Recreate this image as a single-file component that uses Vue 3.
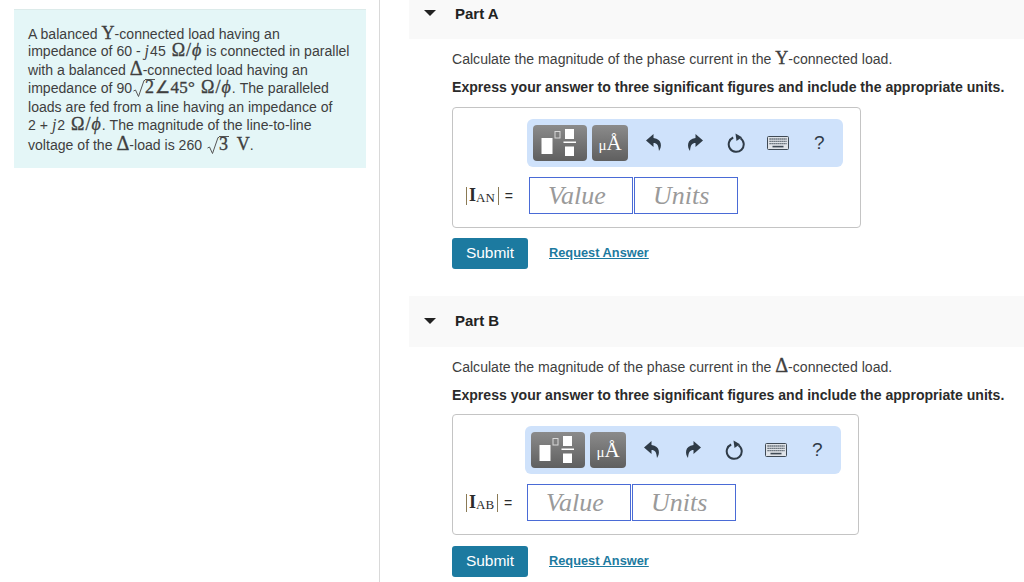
<script setup>
const parts = [
  {
    name: 'Part A',
    load: 'Y',
    sub: 'AN',
    compact: false,
  },
  {
    name: 'Part B',
    load: 'Δ',
    sub: 'AB',
    compact: true,
  },
]
</script>

<template>
  <div class="page">
    <aside class="side">
      <div class="intro">
        <div class="line l1">A balanced <span class="m big">Y</span>-connected load having an</div>
        <div class="line l2">impedance of 60 - <i class="j">j</i>45 <span class="m big per">Ω/<i>ϕ</i></span> is connected in parallel</div>
        <div class="line l3">with a balanced <span class="m big delta">Δ</span>-connected load having an</div>
        <div class="line l4">
          impedance of 90<svg class="radical" width="12" height="18" viewBox="0 0 12 18"><path d="M0.500 11l2-1 3 6.500L11 .5h1" fill="none" stroke="#555" stroke-width="1" /></svg><span class="m big over">2</span><span class="m big angle">∠45°</span>
          <span class="m big per gap">Ω/<i>ϕ</i></span>. The paralleled
        </div>
        <div class="line l5">loads are fed from a line having an impedance of</div>
        <div class="line l6">2 + <i class="j">j</i>2 <span class="m big per">Ω/<i>ϕ</i></span>. The magnitude of the line-to-line</div>
        <div class="line l7">
          voltage of the <span class="m big delta">Δ</span>-load is 260 <svg class="radical" width="12" height="18" viewBox="0 0 12 18"><path d="M0.500 11l2-1 3 6.500L11 .5h1" fill="none" stroke="#555" stroke-width="1" /></svg><span class="m big over">3</span>&nbsp;&nbsp;<span class="m big">V</span>.
        </div>
      </div>
    </aside>

    <main class="main">
      <section v-for="part in parts" :key="part.name" class="part">
        <header class="part-head">
          <span class="caret"></span>
          <span class="part-name">{{ part.name }}</span>
        </header>
        <div class="part-body">
          <p class="question">
            Calculate the magnitude of the phase current in the
            <span class="m big" :class="{ delta: part.load === 'Δ' }">{{ part.load }}</span>-connected load.
          </p>
          <p class="instruction">Express your answer to three significant figures and include the appropriate units.</p>

          <div class="answer" :class="{ compact: part.compact }">
            <div class="toolbar">
              <button class="tool tool-template">
                <svg width="54" height="36" viewBox="0 0 54 36">
                  <rect x="8.500" y="13" width="11" height="16" fill="#fff" />
                  <rect x="22" y="6.500" width="5" height="6.500" fill="none" stroke="#d8d8d8" />
                  <rect x="32" y="4" width="9" height="10" fill="#fff" />
                  <rect x="30.500" y="16.500" width="12.500" height="1.500" fill="#fff" />
                  <rect x="32" y="21.500" width="9" height="9.500" fill="#fff" />
                </svg>
              </button>
              <button class="tool tool-units"><span class="mu">μ</span><span class="ang">Å</span></button>
              <svg class="icon undo" width="18" height="18" viewBox="0 0 18 18">
                <path d="M7.500 0L0 6.500 7.500 13V9C11 9 12.500 11 13 17 16 13 16.500 5 7.500 4z" fill="#2f3b47" />
              </svg>
              <svg class="icon redo" width="18" height="18" viewBox="0 0 18 18">
                <path d="M10.500 0L18 6.500 10.500 13V9C7 9 5.500 11 5 17 2 13 1.500 5 10.500 4z" fill="#2f3b47" />
              </svg>
              <svg class="icon reset" width="20" height="20" viewBox="0 0 20 20">
                <path d="M13.500 5.200A7.500 7.500 0 1 1 6.200 4.500" fill="none" stroke="#2f3b47" stroke-width="2" />
                <path d="M8.500 0.500l6.500 3.800-5.500 3.700z" fill="#2f3b47" />
              </svg>
              <svg class="icon keyboard" width="22" height="14" viewBox="0 0 22 14">
                <rect x="0.500" y="0.500" width="21" height="13" rx="1" fill="#dfe3e8" stroke="#3f4a55" />
                <path d="M2.500 3h17M2.500 5.300h17M2.500 7.600h17" stroke="#3f4a55" stroke-width="1.300" stroke-dasharray="1.200 .8" />
                <path d="M5.500 10.600h11" stroke="#3f4a55" stroke-width="1.600" />
              </svg>
              <span class="help">?</span>
            </div>
            <div class="entry">
              <span class="label">
                <span class="bar"></span><b class="sym">I</b><span class="sub">{{ part.sub }}</span><span class="bar"></span>
                <span class="eq">=</span>
              </span>
              <div class="field">Value</div>
              <div class="field">Units</div>
            </div>
          </div>

          <div class="actions">
            <button class="submit">Submit</button>
            <a class="request">Request Answer</a>
          </div>
        </div>
      </section>
    </main>
  </div>
</template>

<style scoped>
.page {
  display: flex;
  width: 1024px;
  height: 582px;
  overflow: hidden;
  background: #fff;
  color: #3f3f3f;
  font-family: "Liberation Sans", Arial, sans-serif;
  font-size: 14.090px;
}

.side {
  width: 379px;
  flex: none;
  border-right: 1px solid #d9d9d9;
  padding-top: 9px;
}

.intro {
  box-sizing: border-box;
  width: 352px;
  height: 159px;
  margin-left: 14px;
  padding: 15px 0 0 14px;
  background: #e4f6f7;
  border-top: 1px solid #dcebea;
}

.line {
  height: 18px;
  line-height: 18px;
  white-space: nowrap;
}
.l2 { margin-top: -1px; }
.l3 { margin-top: 1px; }
.l5 { margin-top: 1px; }
.l7 { margin-top: 2px; }

.m {
  font-family: "Liberation Serif", "Times New Roman", serif;
}
.big {
  font-size: 18px;
  line-height: 0;
  -webkit-text-stroke: 0.35px currentColor;
}
.delta {
  font-size: 20px;
}
.per {
  margin-left: 2px;
  letter-spacing: 1px;
}
.per.gap {
  margin-left: 6px;
}
.angle {
  font-size: 17px;
  letter-spacing: 0.300px;
}
.j {
  padding-right: 1px;
  font-family: "Liberation Serif", serif;
  font-size: 16px;
}

.radical {
  margin-left: 1px;
  vertical-align: -5px;
}
.over {
  display: inline-block;
  padding-right: 1px;
  border-top: 1px solid #555;
  line-height: 15px;
}

.main {
  flex: 1;
  margin-top: -12px;
  padding-left: 29px;
}

.part {
  height: 308px;
}

.part-head {
  display: flex;
  align-items: center;
  box-sizing: border-box;
  height: 51px;
  padding-bottom: 2px;
  background: #f9f9f9;
}
.part:first-child .part-head {
  padding-bottom: 1px;
}

.caret {
  width: 0;
  height: 0;
  margin-left: 15px;
  border-left: 6px solid transparent;
  border-right: 6px solid transparent;
  border-top: 6px solid #222;
}

.part-name {
  margin-left: 19px;
  font-size: 15px;
  font-weight: 700;
  color: #222;
}

.part-body {
  padding-left: 43px;
}

.question {
  margin: 10px 0 0;
  height: 20px;
  line-height: 20px;
}

.instruction {
  margin: 8px 0 0;
  height: 20px;
  line-height: 20px;
  font-weight: 700;
  color: #2b2b2b;
  white-space: nowrap;
}

.answer {
  box-sizing: border-box;
  width: 409px;
  height: 121px;
  margin-top: 10px;
  padding: 11px 0 0 74px;
  border: 1px solid #c4c4c4;
  border-radius: 4px;
}
.answer.compact {
  width: 407px;
  margin-top: 9px;
  margin-bottom: 11px;
  padding-left: 72px;
}

.toolbar {
  display: flex;
  align-items: center;
  box-sizing: border-box;
  width: 316px;
  height: 48px;
  padding-left: 6px;
  background: #cfe2fb;
  border-radius: 6px;
}

.tool {
  height: 36px;
  padding: 0;
  border: none;
  border-radius: 4px;
  background: linear-gradient(#8b8b8b, #5f5f5f);
  color: #fff;
}
.tool-template {
  width: 54px;
}
.tool-units {
  width: 36px;
  margin-left: 5px;
  font-family: "Liberation Serif", serif;
}
.mu {
  font-size: 15px;
}
.ang {
  font-size: 21px;
}

.icon {
  flex: none;
}
.undo { margin-left: 18px; }
.redo { margin-left: 21px; }
.reset { margin-left: 24px; }
.keyboard { margin-left: 20px; }

.help {
  margin-left: 25px;
  font-size: 19px;
  color: #2f3b47;
}

.entry {
  display: flex;
  align-items: center;
  margin-top: 10px;
  height: 37px;
}

.label {
  display: flex;
  align-items: center;
  width: 63px;
  margin-left: -61px;
  color: #2b2b2b;
}
.compact .label {
  width: 61px;
  margin-left: -59px;
}
.bar {
  width: 1px;
  height: 18px;
  background: #8a7a55;
}
.sym {
  margin-left: 2px;
  font-family: "Liberation Serif", serif;
  font-size: 18px;
}
.sub {
  margin: 5px 3px 0 0;
  font-family: "Liberation Serif", serif;
  font-size: 13px;
}
.eq {
  margin-left: 6px;
}

.field {
  box-sizing: border-box;
  width: 104px;
  height: 37px;
  margin-right: 1px;
  padding-left: 18px;
  border: 1px solid #4a6bd6;
  font-family: "Liberation Serif", serif;
  font-style: italic;
  font-size: 26px;
  line-height: 35px;
  color: #9a9a9a;
}

.actions {
  display: flex;
  align-items: center;
  margin-top: 10px;
}

.submit {
  width: 76px;
  height: 31px;
  padding: 0 0 2px;
  border: none;
  border-radius: 3px;
  background: #1c7aa0;
  color: #fff;
  font-family: inherit;
  font-size: 15.500px;
}

.request {
  margin-left: 21px;
  padding-bottom: 2px;
  font-size: 12.800px;
  font-weight: 700;
  color: #1c7aa0;
  text-decoration: underline;
}
</style>
